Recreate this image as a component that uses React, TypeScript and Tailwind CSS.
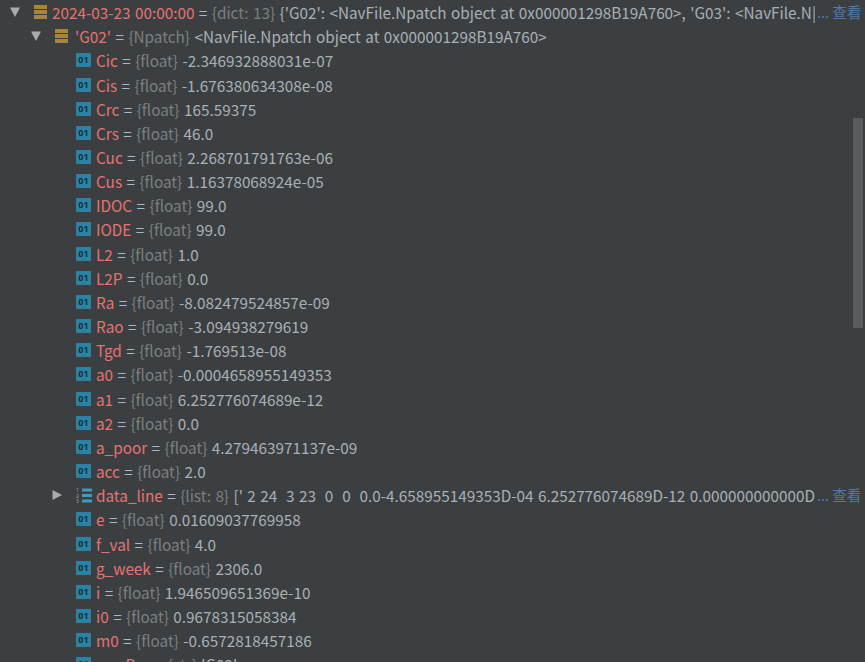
import React from 'react';

const FLOATS: [string, string][] = [
  ['Cic', '-2.346932888031e-07'],
  ['Cis', '-1.676380634308e-08'],
  ['Crc', '165.59375'],
  ['Crs', '46.0'],
  ['Cuc', '2.268701791763e-06'],
  ['Cus', '1.16378068924e-05'],
  ['IDOC', '99.0'],
  ['IODE', '99.0'],
  ['L2', '1.0'],
  ['L2P', '0.0'],
  ['Ra', '-8.082479524857e-09'],
  ['Rao', '-3.094938279619'],
  ['Tgd', '-1.769513e-08'],
  ['a0', '-0.0004658955149353'],
  ['a1', '6.252776074689e-12'],
  ['a2', '0.0'],
  ['a_poor', '4.279463971137e-09'],
  ['acc', '2.0'],
];

const FLOATS_AFTER: [string, string][] = [
  ['e', '0.01609037769958'],
  ['f_val', '4.0'],
  ['g_week', '2306.0'],
  ['i', '1.946509651369e-10'],
  ['i0', '0.9678315058384'],
  ['m0', '-0.6572818457186'],
];

function Arrow({ open }: { open: boolean }) {
  return (
    <svg width="12" height="12" viewBox="0 0 12 12" className="shrink-0">
      <path d={open ? 'M1 1.5h10L6 11z' : 'M1.5 1v10L11 6z'} fill="#a9acae" />
    </svg>
  );
}

function DictIcon() {
  return (
    <svg width="13" height="14" viewBox="0 0 13 14" className="shrink-0">
      <path d="M0 0h13v4H0zM0 5h13v4H0zM0 10h13v4H0z" fill="#a9853a" />
    </svg>
  );
}

function FloatIcon() {
  return (
    <span className="w-[15px] h-[14px] shrink-0 bg-[#2b82a3] text-[#12303f] text-[9px] leading-[14px] font-bold text-center [word-spacing:0] font-['Open_Sans',sans-serif]">
      01
    </span>
  );
}

function ListIcon() {
  return (
    <svg width="16" height="17" viewBox="0 0 16 17" className="shrink-0">
      <path d="M6 1.500h10v3H6zM6 7h10v3H6zM6 12.500h10v3H6z" fill="#3d9bbb" />
      <g fill="#a9acae" fontSize="5" fontFamily="Open Sans, sans-serif">
        <text x="0" y="5">1</text>
        <text x="0" y="10.500">2</text>
        <text x="0" y="16">3</text>
      </g>
    </svg>
  );
}

function Row({
  indent,
  iconWidth = 'w-[20px]',
  arrow,
  icon,
  name,
  type,
  value,
  more,
}: {
  indent: string;
  iconWidth?: string;
  arrow?: 'open' | 'closed';
  icon: React.ReactNode;
  name: string;
  type: string;
  value: string;
  more?: boolean;
}) {
  return (
    <div className={`h-[24.16px] flex items-center shrink-0 ${indent}`}>
      {arrow && (
        <div className="w-[25px] shrink-0">
          <Arrow open={arrow === 'open'} />
        </div>
      )}
      <div className={`${iconWidth} shrink-0 flex items-center`}>{icon}</div>
      <div className="flex-1 min-w-0 whitespace-pre overflow-hidden">
        <span className="text-[#e5736f]">{name}</span>
        <span className="text-[#a9b7c6]"> = </span>
        <span className="text-[#7b7f80]">{`{${type}}`}</span>
        <span className="text-[#a9b0b5]"> {value}</span>
      </div>
      {more && (
        <div className="shrink-0 w-[50px] pl-[2px] whitespace-pre text-[14.5px] [word-spacing:0] text-[#4f78ab]">
          <span>... </span>
          <span>查看</span>
        </div>
      )}
    </div>
  );
}

export default function App() {
  return (
    <div className="relative w-[865px] h-[662px] overflow-hidden bg-[#3c3f41] text-[15.3px] leading-[24px] [word-spacing:1px] font-['Noto_Sans_CJK_SC','Open_Sans',sans-serif] flex flex-col">
      <Row
        indent="pl-[9px]"
        iconWidth="w-[18px]"
        arrow="open"
        icon={<DictIcon />}
        name="2024-03-23 00:00:00"
        type="dict: 13"
        value="{'G02': <NavFile.Npatch object at 0x000001298B19A760>, 'G03': <NavFile.N|"
        more
      />
      <Row
        indent="pl-[30px]"
        arrow="open"
        icon={<DictIcon />}
        name="'G02'"
        type="Npatch"
        value="<NavFile.Npatch object at 0x000001298B19A760>"
      />
      {FLOATS.map(([name, value]) => (
        <Row key={name} indent="pl-[76px]" icon={<FloatIcon />} name={name} type="float" value={value} />
      ))}
      <Row
        indent="pl-[51px]"
        arrow="closed"
        icon={<ListIcon />}
        name="data_line"
        type="list: 8"
        value="[' 2 24  3 23  0  0  0.0-4.658955149353D-04 6.252776074689D-12 0.000000000000D-"
        more
      />
      {FLOATS_AFTER.map(([name, value]) => (
        <Row key={name} indent="pl-[76px]" icon={<FloatIcon />} name={name} type="float" value={value} />
      ))}
      <Row indent="pl-[76px]" icon={<FloatIcon />} name="svr_Prn" type="str" value="'G02'" />
      <div className="absolute top-[118px] right-[2px] w-[10px] h-[210px] bg-[#5a5d5f]" />
    </div>
  );
}
